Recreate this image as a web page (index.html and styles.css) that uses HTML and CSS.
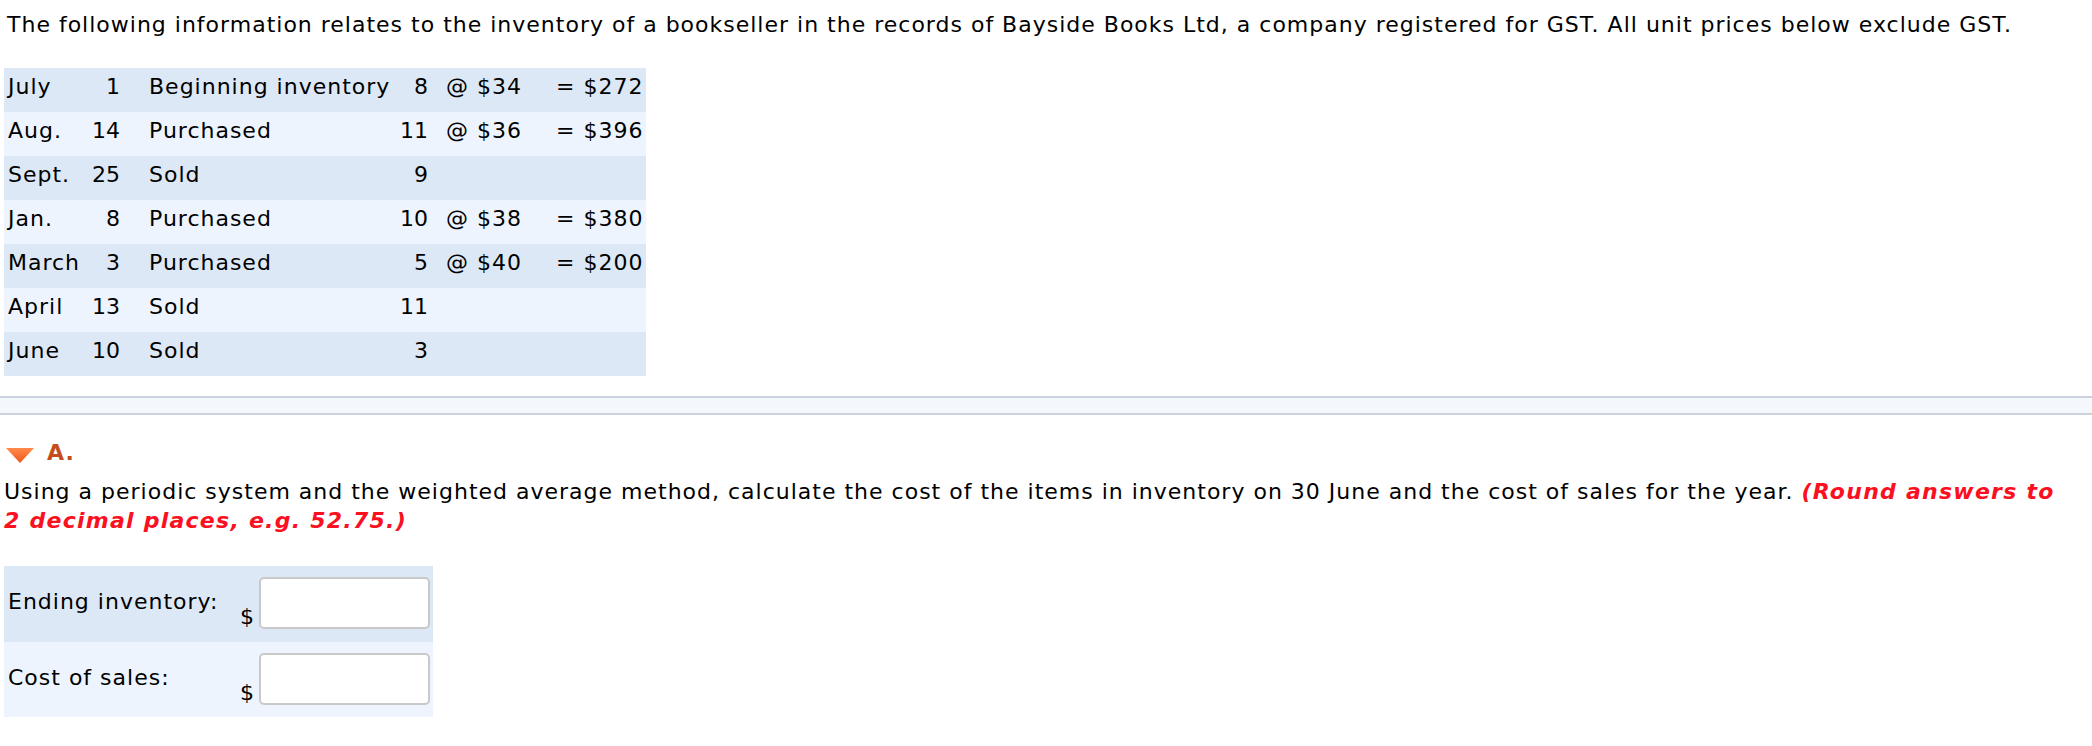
FILE: index.html
```html
<!DOCTYPE html>
<html lang="en">
<head>
<meta charset="utf-8">
<title>Bayside Books inventory</title>
<link rel="stylesheet" href="styles.css">
</head>
<body>
<div class="page">
  <p class="intro">The following information relates to the inventory of a bookseller in the records of Bayside Books Ltd, a company registered for GST. All unit prices below exclude GST.</p>

  <table class="inv">
    <colgroup>
      <col class="c-month"><col class="c-day"><col class="c-desc"><col class="c-qty"><col class="c-price"><col class="c-total">
    </colgroup>
    <tbody>
      <tr><td>July</td><td class="r">1</td><td class="desc">Beginning inventory</td><td class="r">8</td><td class="price">@ $34</td><td>= $272</td></tr>
      <tr><td>Aug.</td><td class="r">14</td><td class="desc">Purchased</td><td class="r">11</td><td class="price">@ $36</td><td>= $396</td></tr>
      <tr><td>Sept.</td><td class="r">25</td><td class="desc">Sold</td><td class="r">9</td><td class="price"></td><td></td></tr>
      <tr><td>Jan.</td><td class="r">8</td><td class="desc">Purchased</td><td class="r">10</td><td class="price">@ $38</td><td>= $380</td></tr>
      <tr><td>March</td><td class="r">3</td><td class="desc">Purchased</td><td class="r">5</td><td class="price">@ $40</td><td>= $200</td></tr>
      <tr><td>April</td><td class="r">13</td><td class="desc">Sold</td><td class="r">11</td><td class="price"></td><td></td></tr>
      <tr><td>June</td><td class="r">10</td><td class="desc">Sold</td><td class="r">3</td><td class="price"></td><td></td></tr>
    </tbody>
  </table>
</div>

<div class="separator"></div>

<div class="page">
  <h2 class="part">
    <svg class="tri" width="28" height="15" viewBox="0 0 28 15" aria-hidden="true">
      <defs>
        <linearGradient id="tg" x1="0" y1="0" x2="0" y2="1">
          <stop offset="0" stop-color="#ff8a4a"/>
          <stop offset="1" stop-color="#f0561a"/>
        </linearGradient>
      </defs>
      <polygon points="0,0 28,0 14,15" fill="url(#tg)"/>
    </svg>
    <span>A.</span>
  </h2>

  <p class="question">Using a periodic system and the weighted average method, calculate the cost of the items in inventory on 30 June and the cost of sales for the year. <em class="hint">(Round answers to 2 decimal places, e.g. 52.75.)</em></p>

  <div class="answers">
    <div class="arow odd">
      <label class="alabel" for="ei">Ending inventory:</label>
      <div class="afield"><span class="cur">$</span><input id="ei" class="box" type="text"></div>
    </div>
    <div class="arow even">
      <label class="alabel" for="cs">Cost of sales:</label>
      <div class="afield"><span class="cur">$</span><input id="cs" class="box" type="text"></div>
    </div>
  </div>
</div>
</body>
</html>
```

FILE: styles.css
```css
html, body {
  margin: 0;
  padding: 0;
  background: #fff;
}

body {
  font-family: "DejaVu Sans", Verdana, sans-serif;
  font-size: 22px;
  letter-spacing: 1px;
  color: #000;
}

.page {
  padding: 0 4px;
}

.intro {
  margin: 0;
  padding: 10px 0 0 3px;
  line-height: 29px;
}

.inv {
  margin-top: 29px;
  border-collapse: collapse;
  table-layout: fixed;
  width: 642px;
}

.c-month { width: 86px; }
.c-day { width: 30px; }
.c-desc { width: 280px; }
.c-qty { width: 28px; }
.c-price { width: 128px; }
.c-total { width: 90px; }

.inv td {
  height: 44px;
  padding: 0;
  line-height: 26px;
  vertical-align: middle;
  white-space: nowrap;
  padding-bottom: 6px;
  box-sizing: border-box;
}

.inv td:first-child {
  padding-left: 4px;
}

.inv td.r {
  text-align: right;
  letter-spacing: 0;
}

.inv td.desc {
  padding-left: 29px;
}

.inv td.price {
  padding-left: 18px;
}

.inv tr:nth-child(odd) td {
  background: #dde8f6;
}

.inv tr:nth-child(even) td {
  background: #edf4fd;
}

.separator {
  margin-top: 20px;
  height: 15px;
  border-top: 2px solid #c9d2de;
  border-bottom: 2px solid #c9d2de;
  background: #f4f7fb;
}

.part {
  margin: 23px 0 0;
  font-size: 22px;
  line-height: 29px;
  font-weight: bold;
  color: #c54d1b;
  display: flex;
  align-items: center;
  gap: 13px;
}

.tri {
  display: block;
  margin-left: 2px;
  margin-top: 6px;
}

.question {
  margin: 10px 0 0;
  padding-right: 20px;
  line-height: 29px;
}

.hint {
  color: #fa1020;
  font-weight: bold;
  font-style: italic;
  letter-spacing: 1.25px;
}

.answers {
  margin-top: 31px;
  width: 429px;
}

.arow {
  display: flex;
  align-items: stretch;
  height: 76px;
}

.arow.even {
  height: 75px;
}

.odd { background: #dde8f6; }
.even { background: #edf4fd; }

.alabel {
  width: 236px;
  padding-left: 4px;
  box-sizing: border-box;
  display: flex;
  align-items: center;
  padding-bottom: 4px;
  line-height: 26px;
}

.afield {
  display: flex;
  align-items: flex-end;
  padding-top: 11px;
  height: 52px;
}

.cur {
  line-height: 22px;
  margin-right: 4px;
  padding-bottom: 1px;
}

.box {
  width: 171px;
  height: 52px;
  box-sizing: border-box;
  border: 2px solid #c9c9c9;
  border-radius: 5px;
  background: #fff;
  margin: 0;
  padding: 0 6px;
  font: inherit;
}
```
